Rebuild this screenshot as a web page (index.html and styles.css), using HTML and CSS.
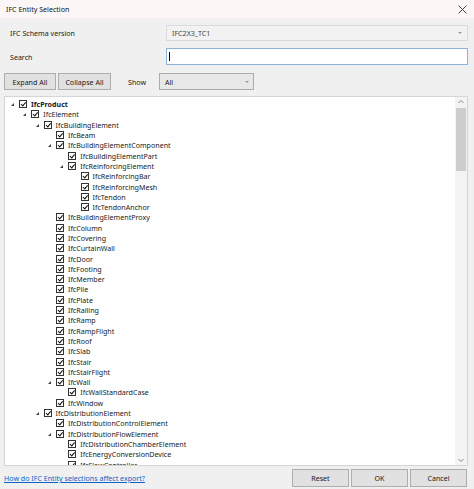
FILE: index.html
```html
<!DOCTYPE html>
<html>
<head>
  <title>IFC Entity Selection</title>
  <link rel="stylesheet" href="styles.css">
</head>
<body>
  <div class="window">
    <div class="titlebar">
      <span class="title">IFC Entity Selection</span>
      <svg class="close" width="9" height="9" viewBox="0 0 9 9"><path d="M0.5 0.5L8.5 8.5M8.5 0.5L0.5 8.5" stroke="#333" stroke-width="0.9"/></svg>
    </div>

    <div class="content">
      <div class="form-row row-schema">
        <label>IFC Schema version</label>
        <div class="combo disabled"><span>IFC2X3_TC1</span><i class="arrow"></i></div>
      </div>
      <div class="form-row row-search">
        <label>Search</label>
        <div class="textbox"><span class="caret"></span></div>
      </div>

      <div class="toolbar">
        <button class="button btn-expand">Expand All</button>
        <button class="button btn-collapse">Collapse All</button>
        <span class="show-label">Show</span>
        <div class="combo show-combo"><span>All</span><i class="arrow"></i></div>
      </div>

      <div class="tree-panel">
        <div class="tree">
          <div class="node l0 bold"><span class="exp open"></span><span class="cb"></span>IfcProduct</div>
          <div class="node l1"><span class="exp open"></span><span class="cb"></span>IfcElement</div>
          <div class="node l2"><span class="exp open"></span><span class="cb"></span>IfcBuildingElement</div>
          <div class="node l3"><span class="exp"></span><span class="cb"></span>IfcBeam</div>
          <div class="node l3"><span class="exp open"></span><span class="cb"></span>IfcBuildingElementComponent</div>
          <div class="node l4"><span class="exp"></span><span class="cb"></span>IfcBuildingElementPart</div>
          <div class="node l4"><span class="exp open"></span><span class="cb"></span>IfcReinforcingElement</div>
          <div class="node l5"><span class="exp"></span><span class="cb"></span>IfcReinforcingBar</div>
          <div class="node l5"><span class="exp"></span><span class="cb"></span>IfcReinforcingMesh</div>
          <div class="node l5"><span class="exp"></span><span class="cb"></span>IfcTendon</div>
          <div class="node l5"><span class="exp"></span><span class="cb"></span>IfcTendonAnchor</div>
          <div class="node l3"><span class="exp"></span><span class="cb"></span>IfcBuildingElementProxy</div>
          <div class="node l3"><span class="exp"></span><span class="cb"></span>IfcColumn</div>
          <div class="node l3"><span class="exp"></span><span class="cb"></span>IfcCovering</div>
          <div class="node l3"><span class="exp"></span><span class="cb"></span>IfcCurtainWall</div>
          <div class="node l3"><span class="exp"></span><span class="cb"></span>IfcDoor</div>
          <div class="node l3"><span class="exp"></span><span class="cb"></span>IfcFooting</div>
          <div class="node l3"><span class="exp"></span><span class="cb"></span>IfcMember</div>
          <div class="node l3"><span class="exp"></span><span class="cb"></span>IfcPile</div>
          <div class="node l3"><span class="exp"></span><span class="cb"></span>IfcPlate</div>
          <div class="node l3"><span class="exp"></span><span class="cb"></span>IfcRailing</div>
          <div class="node l3"><span class="exp"></span><span class="cb"></span>IfcRamp</div>
          <div class="node l3"><span class="exp"></span><span class="cb"></span>IfcRampFlight</div>
          <div class="node l3"><span class="exp"></span><span class="cb"></span>IfcRoof</div>
          <div class="node l3"><span class="exp"></span><span class="cb"></span>IfcSlab</div>
          <div class="node l3"><span class="exp"></span><span class="cb"></span>IfcStair</div>
          <div class="node l3"><span class="exp"></span><span class="cb"></span>IfcStairFlight</div>
          <div class="node l3"><span class="exp open"></span><span class="cb"></span>IfcWall</div>
          <div class="node l4"><span class="exp"></span><span class="cb"></span>IfcWallStandardCase</div>
          <div class="node l3"><span class="exp"></span><span class="cb"></span>IfcWindow</div>
          <div class="node l2"><span class="exp open"></span><span class="cb"></span>IfcDistributionElement</div>
          <div class="node l3"><span class="exp"></span><span class="cb"></span>IfcDistributionControlElement</div>
          <div class="node l3"><span class="exp open"></span><span class="cb"></span>IfcDistributionFlowElement</div>
          <div class="node l4"><span class="exp"></span><span class="cb"></span>IfcDistributionChamberElement</div>
          <div class="node l4"><span class="exp"></span><span class="cb"></span>IfcEnergyConversionDevice</div>
          <div class="node l4"><span class="exp"></span><span class="cb"></span>IfcFlowController</div>
        </div>
        <div class="scrollbar">
          <svg class="sb-arrow" width="12" height="10" viewBox="0 0 12 10"><path d="M3.5 6L6 3.5L8.5 6" fill="none" stroke="#888" stroke-width="1"/></svg>
          <div class="sb-track"><div class="sb-thumb"></div></div>
          <svg class="sb-arrow" width="12" height="10" viewBox="0 0 12 10"><path d="M3.5 4L6 6.5L8.5 4" fill="none" stroke="#888" stroke-width="1"/></svg>
        </div>
      </div>

      <div class="footer">
        <a class="help-link" href="#">How do IFC Entity selections affect export?</a>
        <div class="footer-buttons">
          <button class="button btn-footer">Reset</button>
          <button class="button btn-footer">OK</button>
          <button class="button btn-footer">Cancel</button>
        </div>
      </div>
    </div>
  </div>
</body>
</html>
```

FILE: styles.css
```css
html, body {
  margin: 0;
  padding: 0;
}
body {
  font-family: "Noto Sans", "Open Sans", sans-serif;
  font-size: 7.1px;
  color: #1a1a1a;
  background: #fff;
}
.window {
  width: 474px;
  height: 489px;
  background: #f0f0f0;
  display: flex;
  flex-direction: column;
  overflow: hidden;
}
.titlebar {
  height: 18px;
  display: flex;
  align-items: center;
  justify-content: space-between;
  padding: 0 6px;
  background: #fcf6f6;
}
.title {
  color: #111;
}
.close {
  margin-right: 1px;
}
.content {
  flex: 1;
  display: flex;
  flex-direction: column;
  padding: 0 6px 0 4px;
}
.form-row {
  display: grid;
  grid-template-columns: 162px 1fr;
  align-items: center;
}
.form-row label {
  padding-left: 6px;
}
.row-schema {
  margin-top: 7px;
  height: 16px;
}
.row-search {
  margin-top: 7px;
  height: 17px;
}
.combo {
  height: 100%;
  box-sizing: border-box;
  display: flex;
  align-items: center;
  justify-content: space-between;
  padding: 0 5px 0 5px;
  border: 1px solid #acacac;
  background: #e8e8e8;
}
.combo.disabled {
  border-color: #dadada;
  background: #f2f2f2;
  color: #444;
}
.arrow {
  width: 0;
  height: 0;
  border-left: 2px solid transparent;
  border-right: 2px solid transparent;
  border-top: 2px solid #999;
}
.textbox {
  height: 100%;
  box-sizing: border-box;
  border: 1px solid #8fb3d6;
  background: #fff;
  display: flex;
  align-items: center;
  padding-left: 2px;
}
.caret {
  width: 1px;
  height: 9px;
  background: #000;
}
.toolbar {
  margin-top: 8px;
  height: 17px;
  display: flex;
  align-items: stretch;
}
.button {
  font-family: inherit;
  font-size: 7.1px;
  color: #1a1a1a;
  background: #e1e1e1;
  border: 1px solid #adadad;
  padding: 0;
  margin: 0;
}
.btn-expand {
  width: 52px;
}
.btn-collapse {
  width: 53px;
  margin-left: 2px;
}
.show-label {
  margin-left: 17px;
  width: 31px;
  display: flex;
  align-items: center;
}
.show-combo {
  width: 95px;
  padding-right: 4px;
}
.tree-panel {
  margin-top: 6px;
  height: 370px;
  box-sizing: border-box;
  border: 1px solid #d5d5d5;
  background: #fff;
  display: flex;
}
.tree {
  flex: 1;
  overflow: hidden;
  padding: 2px 0 0 5px;
}
.node {
  height: 10.3px;
  display: flex;
  align-items: center;
  white-space: nowrap;
}
.node.bold {
  font-weight: bold;
}
.l1 { padding-left: 12.3px; }
.l2 { padding-left: 24.6px; }
.l3 { padding-left: 37px; }
.l4 { padding-left: 49.3px; }
.l5 { padding-left: 61.6px; }
.exp {
  width: 9px;
  height: 8px;
  flex-shrink: 0;
  position: relative;
}
.exp.open::before {
  content: '';
  position: absolute;
  left: 1px;
  top: 3px;
  width: 0;
  height: 0;
  border-right: 3.5px solid #3c3c3c;
  border-top: 3.5px solid transparent;
}
.cb {
  width: 8px;
  height: 8px;
  box-sizing: border-box;
  border: 1px solid #333;
  background: #fff;
  margin-right: 4px;
  flex-shrink: 0;
  position: relative;
}
.cb::after {
  content: '';
  position: absolute;
  left: 2px;
  top: 0;
  width: 1.6px;
  height: 3.6px;
  border: solid #111;
  border-width: 0 1.3px 1.3px 0;
  transform: rotate(40deg);
}
.scrollbar {
  width: 12px;
  background: #f3f3f3;
  display: flex;
  flex-direction: column;
}
.sb-arrow {
  flex-shrink: 0;
}
.sb-track {
  flex: 1;
  padding: 1px 1px 0 1px;
}
.sb-thumb {
  height: 63px;
  background: #cdcdcd;
}
.footer {
  flex: 1;
  display: flex;
  align-items: center;
  justify-content: space-between;
}
.help-link {
  color: #0a64c8;
  text-decoration: underline;
  line-height: 10px;
  margin-top: 1px;
}
.footer-buttons {
  display: flex;
  gap: 2px;
  margin-right: 1px;
}
.btn-footer {
  width: 57px;
  height: 18px;
}
```
